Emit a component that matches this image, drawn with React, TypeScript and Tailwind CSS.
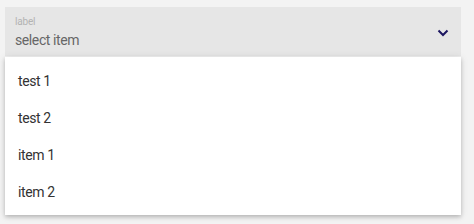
import React from "react";

export default function App() {
  const items = ["test 1", "test 2", "item 1", "item 2"];
  return (
    <div className="w-[474px] h-[224px] bg-[#f3f3f3] pt-[7px] pl-[5px] font-['Roboto',sans-serif]">
      <div className="w-[456px]">
        <div className="h-[49px] bg-[#e6e6e6] flex items-center justify-between pl-[10px] pr-[12px]">
          <div className="flex flex-col">
            <span className="text-[10px] leading-[12px] text-[#b3b3b3] tracking-[-0.2px] mt-[1px]">label</span>
            <span className="text-[14px] leading-[18px] text-[#666666] tracking-[-0.4px] mt-[3px]">select item</span>
          </div>
          <svg width="12" height="8" viewBox="0 0 12 8" className="mt-[2px]">
            <path d="M1.5 1.5 L6 6 L10.5 1.5" fill="none" stroke="#1c1660" strokeWidth="2" />
          </svg>
        </div>
        <div className="mt-[1px] bg-white pt-[6px] pb-[4px] shadow-[0_2px_4px_rgba(0,0,0,0.2),0_1px_8px_rgba(0,0,0,0.1)]">
          {items.map((t) => (
            <div key={t} className="h-[37px] flex items-center pl-[13px] text-[14px] tracking-[-0.4px] text-[#333333]">
              {t}
            </div>
          ))}
        </div>
      </div>
    </div>
  );
}
